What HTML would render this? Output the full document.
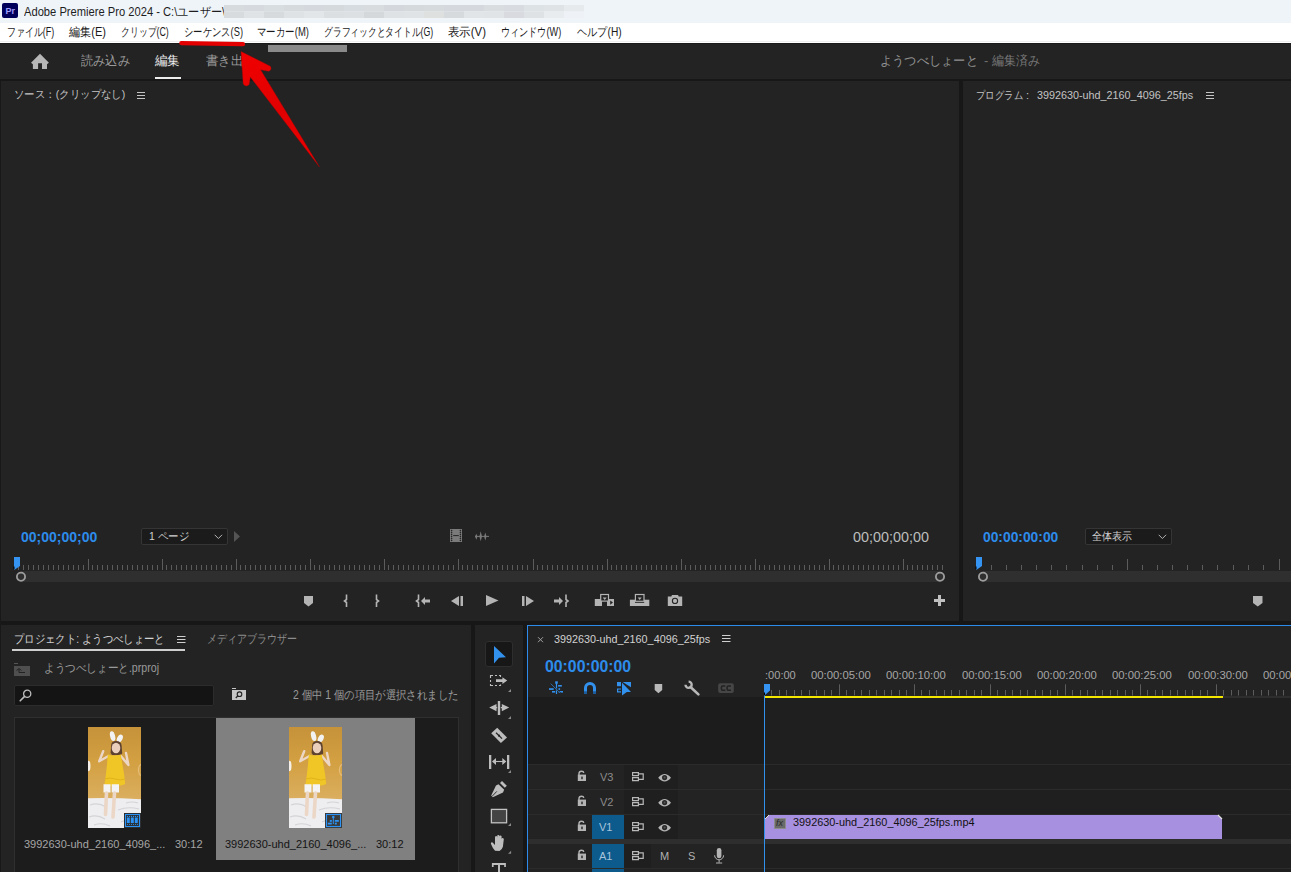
<!DOCTYPE html>
<html><head><meta charset="utf-8">
<style>
*{margin:0;padding:0;box-sizing:border-box}
html,body{width:1291px;height:872px;overflow:hidden;background:#171717;font-family:"Liberation Sans",sans-serif}
.a{position:absolute}
.t{position:absolute;white-space:nowrap;line-height:1}
.f{display:inline-block;white-space:nowrap;transform:scaleX(var(--s));transform-origin:0 0}
.panel{position:absolute;background:#232323;overflow:hidden}
.mi{position:absolute;top:24px;font-size:12px;color:#1a1a1a;white-space:nowrap;line-height:16px}
svg{position:absolute;overflow:visible}
</style></head><body>
<!-- title bar -->
<div class="a" style="left:0;top:0;width:1291px;height:23px;background:#eff4f9"></div>
<div class="a" style="left:2px;top:3px;width:16px;height:15px;background:#00005b;border-radius:2px"></div>
<div class="t" style="left:5.5px;top:6.5px;font-size:9px;font-weight:bold;color:#a0a0ff">Pr</div>
<div class="t" style="left:24px;top:5px;font-size:12px;line-height:14px;color:#1e1e1e"><span class="f" style="--w:201px;--s:0.9306">Adobe Premiere Pro 2024 - C:\ユーザー\</span></div>
<svg style="left:0;top:0" width="600" height="23"><rect x="224" y="5" width="20" height="6.5" fill="#d8dbde"/><rect x="224" y="11.5" width="20" height="6.5" fill="#d8dbde"/><rect x="244" y="5" width="20" height="6.5" fill="#d6dade"/><rect x="244" y="11.5" width="20" height="6.5" fill="#e0e3e6"/><rect x="264" y="5" width="20" height="6.5" fill="#d8dde0"/><rect x="264" y="11.5" width="20" height="6.5" fill="#d6dadd"/><rect x="284" y="5" width="20" height="6.5" fill="#d6dadd"/><rect x="284" y="11.5" width="20" height="6.5" fill="#dfe2e5"/><rect x="304" y="5" width="20" height="6.5" fill="#d5d9dd"/><rect x="304" y="11.5" width="20" height="6.5" fill="#e3e6e8"/><rect x="324" y="5" width="20" height="6.5" fill="#d5d9dc"/><rect x="324" y="11.5" width="20" height="6.5" fill="#dcdfe2"/><rect x="344" y="5" width="20" height="6.5" fill="#d7dce0"/><rect x="344" y="11.5" width="20" height="6.5" fill="#dde0e3"/><rect x="364" y="5" width="20" height="6.5" fill="#d8dcdf"/><rect x="364" y="11.5" width="20" height="6.5" fill="#d4d8db"/><rect x="384" y="5" width="20" height="6.5" fill="#d4d8dc"/><rect x="384" y="11.5" width="20" height="6.5" fill="#dfe2e5"/><rect x="404" y="5" width="20" height="6.5" fill="#d5d9dc"/><rect x="404" y="11.5" width="20" height="6.5" fill="#e0e3e6"/><rect x="424" y="5" width="20" height="6.5" fill="#d6dadd"/><rect x="424" y="11.5" width="20" height="6.5" fill="#dde0de"/><rect x="444" y="5" width="20" height="6.5" fill="#d5d9dd"/><rect x="444" y="11.5" width="20" height="6.5" fill="#d6dadd"/><rect x="464" y="5" width="20" height="6.5" fill="#d5d9dd"/><rect x="464" y="11.5" width="20" height="6.5" fill="#e2e5e8"/><rect x="484" y="5" width="20" height="6.5" fill="#d9dde0"/><rect x="484" y="11.5" width="20" height="6.5" fill="#e1e4e7"/><rect x="504" y="5" width="20" height="6.5" fill="#d8dce0"/><rect x="504" y="11.5" width="20" height="6.5" fill="#d9dadf"/><rect x="524" y="5" width="20" height="6.5" fill="#dde2e5"/><rect x="524" y="11.5" width="20" height="6.5" fill="#dfe2e5"/><rect x="544" y="5" width="20" height="6.5" fill="#dfe3e6"/><rect x="544" y="11.5" width="20" height="6.5" fill="#e9ecef"/><rect x="564" y="5" width="20" height="6.5" fill="#e6eaed"/><rect x="564" y="11.5" width="20" height="6.5" fill="#eef2f6"/></svg>
<!-- menu bar -->
<div class="a" style="left:0;top:23px;width:1291px;height:20px;background:#fff"></div><div class="a" style="left:0;top:41px;width:1291px;height:1px;background:#efefef"></div>
<div class="mi" style="left:7px"><span class="f" style="--w:47px;--s:0.7460">ファイル(F)</span></div>
<div class="mi" style="left:69px"><span class="f" style="--w:37px;--s:0.9250">編集(E)</span></div>
<div class="mi" style="left:121px"><span class="f" style="--w:48px;--s:0.7385">クリップ(C)</span></div>
<div class="mi" style="left:184px"><span class="f" style="--w:59px;--s:0.7763">シーケンス(S)</span></div>
<div class="mi" style="left:257px"><span class="f" style="--w:52px;--s:0.7879">マーカー(M)</span></div>
<div class="mi" style="left:324px"><span class="f" style="--w:109px;--s:0.7315">グラフィックとタイトル(G)</span></div>
<div class="mi" style="left:448px"><span class="f" style="--w:38px;--s:0.9500">表示(V)</span></div>
<div class="mi" style="left:501px"><span class="f" style="--w:60px;--s:0.7595">ウィンドウ(W)</span></div>
<div class="mi" style="left:577px"><span class="f" style="--w:45px;--s:0.8491">ヘルプ(H)</span></div>

<!-- workspace bar -->
<div class="a" style="left:0;top:43px;width:1291px;height:36px;background:#232323"></div><div class="a" style="left:0;top:43px;width:1291px;height:1px;background:#1a1a1a"></div>
<svg style="left:31px;top:54px" width="18" height="15" viewBox="0 0 18 15"><path d="M9 -0.3L17.9 8.7L16 10.2V15H11V9.3H7.1V15H1.9V10.2L0 8.7Z" fill="#b6b6b6"/></svg>
<div class="t" style="left:81px;top:53px;font-size:13px;line-height:15px;color:#9a9a9a"><span class="f" style="--w:49px;--s:0.9423">読み込み</span></div>
<div class="t" style="left:155px;top:53px;font-size:13px;line-height:15px;color:#ececec"><span class="f" style="--w:25px;--s:0.9615">編集</span></div>
<div class="a" style="left:155px;top:77px;width:26px;height:2px;background:#ececec"></div>
<div class="t" style="left:206px;top:53px;font-size:13px;line-height:15px;color:#9a9a9a"><span class="f" style="--w:50px;--s:0.9615">書き出し</span></div>
<div class="t" style="left:880px;top:53px;font-size:13px;line-height:15px;color:#939393"><span class="f" style="--w:98px;--s:0.9423">ようつべしょーと</span></div><div class="t" style="left:984px;top:53px;font-size:13px;line-height:15px;color:#6e6e6e">-</div><div class="t" style="left:992px;top:53px;font-size:13px;line-height:15px;color:#777"><span class="f" style="--w:48px;--s:0.9231">編集済み</span></div>

<!-- PANELS_START -->
<!-- SOURCE PANEL -->
<div class="panel" style="left:0;top:81px;width:959px;height:540px"></div>
<div class="t" style="left:14px;top:88px;font-size:11px;line-height:12px;color:#c4c4c4"><span class="f" style="--w:111px;--s:0.9487">ソース：(クリップなし)</span></div>
<svg style="left:137px;top:92px" width="9" height="8"><path d="M0 0.5H8M0 3.5H8M0 6.5H8" stroke="#c4c4c4" stroke-width="1"/></svg>
<div class="t" style="left:21px;top:530px;font-size:14px;line-height:14px;font-weight:bold;color:#2d8ceb"><span class="f" style="--w:76px;--s:1.0000">00;00;00;00</span></div>
<div class="a" style="left:141px;top:528px;width:87px;height:17px;background:#1b1b1b;border:1px solid #353535;border-radius:2px"></div>
<div class="t" style="left:149px;top:530px;font-size:11px;line-height:12px;color:#d0d0d0"><span class="f" style="--w:40px;--s:0.9524">1 ページ</span></div>
<svg style="left:214px;top:534px" width="10" height="6"><path d="M0.7 0.8L4.4 4.5L8.1 0.8" stroke="#b4b4b4" fill="none" stroke-width="1"/></svg>
<svg style="left:234px;top:531px" width="7" height="11"><path d="M0 0L6 5.5L0 11Z" fill="#545454"/></svg>
<svg style="left:450px;top:529px" width="13" height="13"><rect x="0" y="0" width="12" height="13" fill="#7a7a7a"/><g fill="#262626"><circle cx="1.6" cy="1.6" r="0.8"/><circle cx="10.4" cy="1.6" r="0.8"/><circle cx="1.6" cy="3.6" r="0.8"/><circle cx="10.4" cy="3.6" r="0.8"/><circle cx="1.6" cy="5.6" r="0.8"/><circle cx="10.4" cy="5.6" r="0.8"/><circle cx="1.6" cy="7.6" r="0.8"/><circle cx="10.4" cy="7.6" r="0.8"/><circle cx="1.6" cy="9.6" r="0.8"/><circle cx="10.4" cy="9.6" r="0.8"/><circle cx="1.6" cy="11.5" r="0.8"/><circle cx="10.4" cy="11.5" r="0.8"/></g><rect x="3.2" y="6" width="5.6" height="1.1" fill="#2c2c2c"/></svg>
<svg style="left:474px;top:530px" width="16" height="12"><path d="M1 6.4H15" stroke="#7a7a7a" stroke-width="1"/><path d="M2.3 3.8L3.5 6.4L2.3 9.8L1.1 6.4Z M6.7 1.2L8 6.4L6.7 11.2L5.4 6.4Z M11.3 2.6L12.5 6.4L11.3 10.4L10.1 6.4Z" fill="#7a7a7a"/></svg>
<div class="t" style="left:853px;top:530px;font-size:14px;line-height:14px;color:#bdbdbd"><span class="f" style="--w:76px;--s:1.0270">00;00;00;00</span></div>
<svg style="left:0;top:0" width="959" height="621"><path d="M14.5 559V570M18.5 565V570M23.5 565V570M28.5 565V570M33.5 565V570M38.5 565V570M43.5 565V570M48.5 565V570M53.5 565V570M58.5 565V570M63.5 565V570M68.5 565V570M73.5 565V570M78.5 565V570M83.5 565V570M88.5 559V570M92.5 565V570M97.5 565V570M102.5 565V570M107.5 565V570M112.5 565V570M117.5 565V570M122.5 565V570M127.5 565V570M132.5 565V570M137.5 565V570M142.5 565V570M147.5 565V570M152.5 565V570M157.5 565V570M162.5 559V570M166.5 565V570M171.5 565V570M176.5 565V570M181.5 565V570M186.5 565V570M191.5 565V570M196.5 565V570M201.5 565V570M206.5 565V570M211.5 565V570M216.5 565V570M221.5 565V570M226.5 565V570M231.5 565V570M236.5 559V570M240.5 565V570M245.5 565V570M250.5 565V570M255.5 565V570M260.5 565V570M265.5 565V570M270.5 565V570M275.5 565V570M280.5 565V570M285.5 565V570M290.5 565V570M295.5 565V570M300.5 565V570M305.5 565V570M310.5 559V570M314.5 565V570M319.5 565V570M324.5 565V570M329.5 565V570M334.5 565V570M339.5 565V570M344.5 565V570M349.5 565V570M354.5 565V570M359.5 565V570M364.5 565V570M369.5 565V570M374.5 565V570M379.5 565V570M384.5 559V570M388.5 565V570M393.5 565V570M398.5 565V570M403.5 565V570M408.5 565V570M413.5 565V570M418.5 565V570M423.5 565V570M428.5 565V570M433.5 565V570M438.5 565V570M443.5 565V570M448.5 565V570M453.5 565V570M458.5 559V570M462.5 565V570M467.5 565V570M472.5 565V570M477.5 565V570M482.5 565V570M487.5 565V570M492.5 565V570M497.5 565V570M502.5 565V570M507.5 565V570M512.5 565V570M517.5 565V570M522.5 565V570M527.5 565V570M533.5 559V570M537.5 565V570M542.5 565V570M547.5 565V570M552.5 565V570M557.5 565V570M562.5 565V570M567.5 565V570M572.5 565V570M577.5 565V570M582.5 565V570M587.5 565V570M592.5 565V570M597.5 565V570M602.5 565V570M607.5 559V570M611.5 565V570M616.5 565V570M621.5 565V570M626.5 565V570M631.5 565V570M636.5 565V570M641.5 565V570M646.5 565V570M651.5 565V570M656.5 565V570M661.5 565V570M666.5 565V570M671.5 565V570M676.5 565V570M681.5 559V570M685.5 565V570M690.5 565V570M695.5 565V570M700.5 565V570M705.5 565V570M710.5 565V570M715.5 565V570M720.5 565V570M725.5 565V570M730.5 565V570M735.5 565V570M740.5 565V570M745.5 565V570M750.5 565V570M755.5 559V570M759.5 565V570M764.5 565V570M769.5 565V570M774.5 565V570M779.5 565V570M784.5 565V570M789.5 565V570M794.5 565V570M799.5 565V570M804.5 565V570M809.5 565V570M814.5 565V570M819.5 565V570M824.5 565V570M829.5 559V570M833.5 565V570M838.5 565V570M843.5 565V570M848.5 565V570M853.5 565V570M858.5 565V570M863.5 565V570M868.5 565V570M873.5 565V570M878.5 565V570M883.5 565V570M888.5 565V570M893.5 565V570M898.5 565V570M903.5 559V570M907.5 565V570M912.5 565V570M917.5 565V570M922.5 565V570M927.5 565V570M932.5 565V570M937.5 565V570M942.5 565V570" stroke="#5c5c5c" stroke-width="1"/></svg>
<div class="a" style="left:21px;top:571px;width:919px;height:11px;background:#2f2f2f"></div>
<svg style="left:14px;top:557px" width="7" height="13"><path d="M0 0H6V9L1 12.5H0Z" fill="#3593f2"/><path d="M0 9.5V12.5" stroke="#000" stroke-width="1"/></svg>
<svg style="left:16px;top:572px" width="10" height="10"><circle cx="5" cy="4.7" r="4.1" stroke="#9e9e9e" stroke-width="1.8" fill="#2f2f2f"/></svg>
<svg style="left:935px;top:572px" width="10" height="10"><circle cx="5" cy="4.7" r="4.1" stroke="#9e9e9e" stroke-width="1.8" fill="#2f2f2f"/></svg>
<!-- transport -->
<svg style="left:0;top:0" width="959" height="621" fill="#b4b4b4" stroke="#b4b4b4">
 <path d="M304 596H313V603L308.5 606.5L304 603Z" stroke="none"/>
 <path d="M346.5 594.5V599.5L344.5 601L346.5 602.5V607" fill="none" stroke-width="1.6"/>
 <path d="M376.5 594.5V599.5L378.5 601L376.5 602.5V607" fill="none" stroke-width="1.6"/>
 <path d="M418.5 594.5V599.5L416.5 601L418.5 602.5V607" fill="none" stroke-width="1.6"/>
 <path d="M421 601L425 597V599.5H430V602.5H425V605Z" stroke="none"/>
 <path d="M451 601L459 596V606Z M460.5 596H463V606H460.5Z" stroke="none"/>
 <path d="M486 595V606L498.5 600.5Z" stroke="none"/>
 <path d="M522 596H524.5V606H522Z M526 596V606L534 601Z" stroke="none"/>
 <path d="M554 599.5H559V597L563 601L559 605V602.5H554Z" stroke="none"/>
 <path d="M566 594.5V599.5L568 601L566 602.5V607" fill="none" stroke-width="1.6"/>
 <path d="M594.8 599H602V606H594.8Z M607 599H614V606H607Z" stroke="none"/>
 <rect x="600.7" y="594.5" width="7.8" height="6.6" fill="#232323" stroke="#b4b4b4" stroke-width="1.2"/>
 <path d="M602.8 597.4H606.7L604.75 600Z" stroke="none"/>
 <path d="M610.2 600.6L613 602.6L610.2 604.7Z" fill="#232323" stroke="none"/>
 <path d="M629.9 599.7H649.3V606H629.9Z" stroke="none"/>
 <rect x="635.4" y="594.5" width="8.6" height="6.8" fill="#232323" stroke="#b4b4b4" stroke-width="1.2"/>
 <path d="M637.7 597.4H641.7L639.7 600Z" stroke="none"/>
 <path d="M635 602.4H644.2" stroke="#232323" stroke-width="0.9"/>
 <path d="M667.8 596.6H671.3L672 595H678L678.7 596.6H682.2V606H667.8Z" stroke="none"/>
 <circle cx="675" cy="600.9" r="2.6" fill="none" stroke="#232323" stroke-width="1.1"/>
 <path d="M934 599H945V602H934Z M938 595H941V606H938Z" stroke="none" fill="#c0c0c0"/>
</svg>

<!-- PROGRAM PANEL -->
<div class="panel" style="left:963px;top:81px;width:328px;height:540px"></div>
<div class="t" style="left:976px;top:89px;font-size:11px;line-height:12px;color:#c4c4c4"><span class="f" style="--w:47px;--s:0.8545">プログラム</span></div><div class="t" style="left:1026px;top:89px;font-size:11px;line-height:12px;color:#c4c4c4">:</div><div class="t" style="left:1037px;top:89px;font-size:11px;line-height:12px;color:#c4c4c4"><span class="f" style="--w:156px;--s:0.9811">3992630-uhd_2160_4096_25fps</span></div>
<svg style="left:1206px;top:92px" width="9" height="8"><path d="M0 0.5H8M0 3.5H8M0 6.5H8" stroke="#c4c4c4" stroke-width="1"/></svg>
<div class="t" style="left:983px;top:530px;font-size:14px;line-height:14px;font-weight:bold;color:#2d8ceb"><span class="f" style="--w:75px;--s:0.9868">00:00:00:00</span></div>
<div class="a" style="left:1085px;top:528px;width:87px;height:17px;background:#1b1b1b;border:1px solid #353535;border-radius:2px"></div>
<div class="t" style="left:1092px;top:530px;font-size:11px;line-height:12px;color:#d0d0d0"><span class="f" style="--w:40px;--s:0.9091">全体表示</span></div>
<svg style="left:1158px;top:534px" width="10" height="6"><path d="M0.7 0.8L4.4 4.5L8.1 0.8" stroke="#b4b4b4" fill="none" stroke-width="1"/></svg>
<svg style="left:0;top:0" width="1291" height="621"><path d="M976.5 559V570M991.5 565V570M1006.5 565V570M1021.5 565V570M1036.5 565V570M1051.5 565V570M1066.5 565V570M1082.5 565V570M1097.5 565V570M1112.5 565V570M1127.5 559V570M1142.5 565V570M1157.5 565V570M1172.5 565V570M1187.5 565V570M1202.5 565V570M1217.5 565V570M1233.5 565V570M1248.5 565V570M1263.5 565V570M1279.5 559V570" stroke="#5c5c5c" stroke-width="1"/></svg>
<div class="a" style="left:983px;top:571px;width:308px;height:11px;background:#2f2f2f"></div>
<svg style="left:976px;top:557px" width="7" height="13"><path d="M0 0H6V9L1 12.5H0Z" fill="#3593f2"/><path d="M0 9.5V12.5" stroke="#000" stroke-width="1"/></svg>
<svg style="left:978px;top:572px" width="10" height="10"><circle cx="5" cy="4.7" r="4.1" stroke="#9e9e9e" stroke-width="1.8" fill="#2f2f2f"/></svg>
<svg style="left:1253px;top:595px" width="10" height="12"><path d="M0 1H9.5V8L4.75 11.5L0 8Z" fill="#b4b4b4"/></svg>
<!-- PROJECT PANEL -->
<div class="panel" style="left:0;top:625px;width:471px;height:247px"></div>
<svg width="0" height="0" style="left:0;top:0">
<defs>
<linearGradient id="wall" x1="0" y1="0" x2="0" y2="1"><stop offset="0" stop-color="#c6923a"/><stop offset="0.35" stop-color="#d3a042"/><stop offset="0.7" stop-color="#daae5e"/></linearGradient>
<symbol id="thumb" viewBox="0 0 53 101">
 <rect width="53" height="101" fill="url(#wall)"/>
 <path d="M0 71.2Q26 70.5 53 72.3V101H0Z" fill="#eeeef0"/>
 <path d="M2 78Q10 75 18 80M30 83Q40 79 51 82M1 90Q9 87 17 92M33 95Q42 90 52 93M6 98Q14 95 22 99M38 76Q44 74 50 76" stroke="#d4d4d8" fill="none" stroke-width="1.1"/>
 <ellipse cx="0.5" cy="39" rx="2" ry="5.2" fill="#f4efe8"/>
 <ellipse cx="53.5" cy="43" rx="3" ry="5.5" fill="none" stroke="#e6bc78" stroke-width="1.3"/>
 <ellipse cx="24.6" cy="9.2" rx="2.5" ry="5" fill="#f2f2f2" transform="rotate(-14 24.6 9.2)"/>
 <ellipse cx="31.8" cy="11.4" rx="2.7" ry="4" fill="#f2f2f2" transform="rotate(28 31.8 11.4)"/>
 <path d="M23.2 18Q23.5 14 28.3 14Q33.2 14 33.6 18.5L34.2 26.5L32.5 28H24L22.6 26Z" fill="#5e4230"/>
 <ellipse cx="28" cy="21" rx="4.3" ry="5.3" fill="#ead0bc"/>
 <path d="M20.5 29L11.2 34.3L15.2 24.2" stroke="#ecd6c6" stroke-width="2.4" fill="none" stroke-linecap="round" stroke-linejoin="round"/>
 <path d="M32.8 29L40.4 38L38 26" stroke="#ecd6c6" stroke-width="2.4" fill="none" stroke-linecap="round" stroke-linejoin="round"/>
 <path d="M19.8 27.6Q26 29.5 32.8 27.6L34.5 38L36.2 48L37.2 57Q33 59.5 27 58.5Q21 60 16.4 58L17.8 48L19 38Z" fill="#f0c626"/>
 <path d="M17 52Q22 50 27 52T37 52" stroke="#e0b018" stroke-width="0.9" fill="none"/>
 <path d="M15.5 57.2H22.5V65.6H15.5Z M23.7 57.2H31V65.6H23.7Z" fill="#f4f4f4"/>
 <path d="M18.5 66L17.5 87.5M26.5 66L25 90" stroke="#ecd6c6" stroke-width="3.6" stroke-linecap="round"/>
</symbol>
</defs></svg>
<div class="t" style="left:14px;top:633px;font-size:12px;line-height:12px;color:#d2d2d2"><span class="f" style="--w:151px;--s:0.8629">プロジェクト: ようつべしょーと</span></div>
<svg style="left:177px;top:636px" width="9" height="8"><path d="M0 0.5H8.5M0 3.5H8.5M0 6.5H8.5" stroke="#cfcfcf" stroke-width="1"/></svg>
<div class="a" style="left:12px;top:649px;width:173px;height:2px;background:#cfcfcf"></div>
<div class="t" style="left:207px;top:633px;font-size:12px;line-height:12px;color:#8c8c8c"><span class="f" style="--w:90px;--s:0.8333">メディアブラウザー</span></div>
<svg style="left:14px;top:663px" width="17" height="14"><path d="M0 0.5H4" stroke="#555" stroke-width="1"/><rect x="0" y="3" width="16" height="10" fill="#4f4f4f"/><path d="M5 6V9.5H11M7.5 7.5L5 5.5L2.5 7.5" stroke="#232323" stroke-width="1" fill="none"/></svg>
<div class="t" style="left:44px;top:662px;font-size:12px;line-height:12px;color:#9a9a9a"><span class="f" style="--w:115px;--s:0.8846">ようつべしょーと.prproj</span></div>
<div class="a" style="left:14px;top:685px;width:200px;height:21px;background:#141414;border:1px solid #2c2c2c;border-radius:2px"></div>
<svg style="left:19px;top:689px" width="14" height="13"><circle cx="8.2" cy="4.8" r="3.6" stroke="#bdbdbd" stroke-width="1.3" fill="none"/><path d="M5.6 7.4L1.2 11.8" stroke="#bdbdbd" stroke-width="1.6" stroke-linecap="round"/></svg>
<svg style="left:232px;top:688px" width="15" height="13"><path d="M0 0.5H4" stroke="#c6c6c6" stroke-width="1"/><rect x="0" y="2" width="14" height="10" fill="#c6c6c6"/><circle cx="7.5" cy="6.2" r="2.3" stroke="#232323" stroke-width="1.1" fill="none"/><path d="M5.8 7.9L3.8 10" stroke="#232323" stroke-width="1.3"/></svg>
<div class="t" style="left:293px;top:689px;font-size:12px;line-height:12px;color:#9a9a9a"><span class="f" style="--w:165px;--s:0.8639">2 個中 1 個の項目が選択されました</span></div>
<div class="a" style="left:14px;top:717px;width:445px;height:160px;background:#1c1c1c;border:1px solid #2f2f2f"></div>
<div class="a" style="left:216px;top:718px;width:199px;height:142px;background:#808080"></div>
<svg style="left:88px;top:727px" width="53" height="101"><use href="#thumb"/></svg>
<svg style="left:289px;top:727px" width="53" height="101"><use href="#thumb"/></svg>
<svg style="left:124px;top:813px" width="17" height="15"><rect width="17" height="15" fill="#2c2c2c"/><rect x="1.5" y="1.5" width="14" height="12" fill="none" stroke="#2d93f5" stroke-width="1.1"/><g fill="#2d93f5"><circle cx="3.4" cy="3.4" r="0.6"/><circle cx="5.4" cy="3.4" r="0.6"/><circle cx="7.4" cy="3.4" r="0.6"/><circle cx="9.4" cy="3.4" r="0.6"/><circle cx="11.4" cy="3.4" r="0.6"/><circle cx="13.4" cy="3.4" r="0.6"/><circle cx="3.4" cy="11.5" r="0.6"/><circle cx="5.4" cy="11.5" r="0.6"/><circle cx="7.4" cy="11.5" r="0.6"/><circle cx="9.4" cy="11.5" r="0.6"/><circle cx="11.4" cy="11.5" r="0.6"/><circle cx="13.4" cy="11.5" r="0.6"/><rect x="2.8" y="4.5" width="3" height="5.6"/><rect x="6.8" y="4.5" width="3" height="5.6"/><rect x="10.8" y="4.5" width="3" height="5.6"/></g></svg>
<svg style="left:325px;top:813px" width="17" height="15"><rect width="17" height="15" fill="#3a3a3a"/><rect x="1.5" y="1.5" width="14" height="12" fill="none" stroke="#2d93f5" stroke-width="1.1"/><g fill="#2d93f5"><circle cx="8.3" cy="4" r="1.3"/><rect x="7.8" y="4" width="1" height="7"/><rect x="4.8" y="7" width="2" height="1.8"/><rect x="9.8" y="7" width="4" height="1.8"/><rect x="2.8" y="9.7" width="4" height="1.8"/><rect x="9.8" y="9.7" width="2" height="1.8"/></g></svg>
<div class="t" style="left:24px;top:838px;font-size:11px;line-height:12px;color:#a6a6a6"><span class="f" style="--w:141px;--s:1.0000">3992630-uhd_2160_4096_...</span></div>
<div class="t" style="left:175px;top:838px;font-size:11px;line-height:12px;color:#a6a6a6"><span class="f" style="--w:28px;--s:1.0000">30:12</span></div>
<div class="t" style="left:225px;top:838px;font-size:11px;line-height:12px;color:#141414"><span class="f" style="--w:141px;--s:1.0000">3992630-uhd_2160_4096_...</span></div>
<div class="t" style="left:376px;top:838px;font-size:11px;line-height:12px;color:#141414"><span class="f" style="--w:28px;--s:1.0000">30:12</span></div>

<!-- TOOLS PANEL -->
<div class="panel" style="left:475px;top:625px;width:48px;height:247px"></div>
<div class="a" style="left:485px;top:641px;width:28px;height:26px;background:#171717;border:1px solid #2e2e2e;border-radius:3px"></div>
<svg style="left:0;top:0" width="523" height="872" fill="#bdbdbd">
 <path d="M494 646L506 657.3L499 657.8L494 663.5Z" fill="#3391ee"/>
 <path d="M490.5 678V675.5H493M495 675.5H497M499 675.5H500.5V677M490.5 680V682M490.5 684V685.5H493M495 685.5H497M499 685.5H500.5V684.5" stroke="#bdbdbd" stroke-width="1.1" fill="none"/>
 <path d="M496 679.2H502.4V677.2L507.2 680.6L502.4 684V682H496Z"/>
 <path d="M508 692L511 689V692Z" fill="#8a8a8a"/>
 <path d="M497.8 701H500.2V715H497.8Z"/>
 <path d="M489.2 707.6L496.5 703.9V706.9H497.2V708.3H496.5V711.3Z M509.2 707.6L501.8 703.9V706.9H500.8V708.3H501.8V711.3Z"/>
 <path d="M508 719L511 716V719Z" fill="#8a8a8a"/>
 <path d="M497.2 727.7L507 737.5L500.9 742.9L491.2 733.2Z"/>
 <path d="M496 732.8L502 738.6" stroke="#232323" stroke-width="1.2"/>
 <circle cx="499" cy="735.7" r="1.1" fill="#232323"/>
 <path d="M489 755H491.3V769H489Z M507 755H509.3V769H507Z"/>
 <path d="M494.5 761.5H503.5" stroke="#bdbdbd" stroke-width="1.1"/>
 <path d="M492 761.5L496 758V765Z M506.3 761.5L502.3 758V765Z"/>
 <path d="M508 773L511 770V773Z" fill="#8a8a8a"/>
 <path d="M500 783L502 781L506.8 785.8L504.8 787.8Z"/>
 <path d="M498.5 784.2L504.2 789.8L503 792.5L492.8 797.2L491.2 795.6L496 785.4Z"/>
 <path d="M492 796.4L496.8 791.4" stroke="#232323" stroke-width="0.9"/>
 <rect x="491.4" y="809.4" width="15.2" height="13.4" fill="#444" stroke="#c2c2c2" stroke-width="1.3"/>
 <path d="M508 826L511 823V826Z" fill="#8a8a8a"/>
 <path d="M495 850.8Q492.5 848 491 844L490.9 843Q491.5 842 492.6 842.6L495 845V837.4Q495.2 836.1 496.1 836.1Q497.1 836.1 497.2 837.4V842.5V835.8Q497.3 834.9 498.3 834.9Q499.3 834.9 499.4 835.8V842.5V836.5Q499.5 835.6 500.5 835.6Q501.5 835.6 501.6 836.5V843V839Q501.8 838 502.8 838Q503.9 838.2 503.8 839.2L502.9 846.8Q502 850 499.5 850.9Z"/>
 <path d="M508 853.8L511.1 850.8V853.8Z" fill="#8a8a8a"/>
 <path d="M491.9 863H505.9V867H504.2V865H500V872H498V865H493.6V867H491.9Z"/>
</svg>

<!-- TIMELINE PANEL -->
<div class="panel" style="left:527px;top:625px;width:764px;height:247px"></div>
<div class="a" style="left:528px;top:697px;width:236px;height:67px;background:#1c1c1c"></div>
<div class="a" style="left:765px;top:698px;width:526px;height:174px;background:#1f1f1f"></div>
<div class="a" style="left:528px;top:764px;width:236px;height:108px;background:#232323"></div>
<!-- track separators -->
<div class="a" style="left:528px;top:764px;width:763px;height:1px;background:#2b2b2b"></div>
<div class="a" style="left:528px;top:789px;width:763px;height:1px;background:#2b2b2b"></div>
<div class="a" style="left:528px;top:814px;width:763px;height:1px;background:#2b2b2b"></div>
<div class="a" style="left:528px;top:839px;width:763px;height:5px;background:#2e2e2e"></div>
<div class="a" style="left:528px;top:868px;width:763px;height:1px;background:#2b2b2b"></div>
<!-- header columns darker -->
<div class="a" style="left:624px;top:765px;width:54px;height:24px;background:#1f1f1f"></div>
<div class="a" style="left:624px;top:790px;width:54px;height:24px;background:#1f1f1f"></div>
<div class="a" style="left:624px;top:815px;width:54px;height:24px;background:#1f1f1f"></div>
<div class="a" style="left:624px;top:844px;width:27px;height:24px;background:#1f1f1f"></div>
<div class="a" style="left:592px;top:815px;width:32px;height:24px;background:#0d5a8c"></div>
<div class="a" style="left:592px;top:844px;width:32px;height:24px;background:#0d5a8c"></div>
<div class="a" style="left:592px;top:869px;width:32px;height:3px;background:#0d5a8c"></div>
<!-- border -->
<div class="a" style="left:527px;top:625px;width:764px;height:1px;background:#2d8ceb"></div>
<div class="a" style="left:527px;top:625px;width:1px;height:247px;background:#2d8ceb"></div>
<svg style="left:537px;top:636px" width="7" height="7"><path d="M1 1.2L6 6.2M6 1.2L1 6.2" stroke="#a0a0a0" stroke-width="1"/></svg>
<div class="t" style="left:554px;top:633px;font-size:11px;line-height:12px;color:#d2d2d2"><span class="f" style="--w:156px;--s:0.9811">3992630-uhd_2160_4096_25fps</span></div>
<svg style="left:722px;top:635px" width="9" height="8"><path d="M0 0.5H8.5M0 3.5H8.5M0 6.5H8.5" stroke="#cfcfcf" stroke-width="1"/></svg>
<div class="t" style="left:545px;top:659px;font-size:16px;line-height:16px;font-weight:bold;color:#2d8ceb"><span class="f" style="--w:86px;--s:0.9885">00:00:00:00</span></div>
<svg style="left:0;top:0" width="1291" height="872">
 <g fill="#3391ee">
  <rect x="555.2" y="681.3" width="2.6" height="2.4"/>
  <rect x="555.9" y="683" width="1.2" height="11"/>
  <rect x="558.1" y="685" width="3.7" height="1.6"/>
  <rect x="549" y="688.2" width="4.7" height="1.7"/>
  <rect x="558.5" y="688.2" width="1.6" height="1.7"/>
  <rect x="552" y="691" width="3.2" height="1.6"/>
  <rect x="558.5" y="691" width="4.5" height="1.6"/>
 </g>
 <path d="M550.3 683.2L560.7 693.6" stroke="#232323" stroke-width="1.4"/>
 <path d="M550.8 683.7L560.2 693.1" stroke="#3391ee" stroke-width="0.7"/>
 <path d="M584 694V688A6 6 0 0 1 596 688V694H593V688A3 3 0 0 0 587 688V694Z" fill="#3391ee"/>
 <path d="M584 691.3H587V694H584ZM593 691.3H596V694H593Z" fill="#1d5c9c"/>
 <path d="M617 682H621V686.2H617Z" fill="#3391ee"/>
 <path d="M617 688.4H621V689.6H618.2V691.3H621V692.5H617Z" fill="#3391ee"/>
 <path d="M622.6 682H631V687.2Z" fill="#3391ee"/>
 <path d="M622 682.8L631 692L626.8 692L622 695.5Z" fill="#3391ee"/>
 <path d="M654.7 684H662.2V690L658.45 693.3L654.7 690Z" fill="#b8b8b8"/>
 <path d="M688.6 681.7A3.1 3.1 0 1 1 685.5 684.8" stroke="#b8b8b8" stroke-width="2.3" fill="none"/>
 <path d="M690.5 687L698.4 694.4" stroke="#b8b8b8" stroke-width="2.6" stroke-linecap="round"/>
 <rect x="718.2" y="683.2" width="15.6" height="9.7" rx="2" fill="#464646"/>
 <path d="M725.3 686H722.6Q721.4 686 721.4 687.2V689Q721.4 690.2 722.6 690.2H725.3M731 686H728.3Q727.1 686 727.1 687.2V689Q727.1 690.2 728.3 690.2H731" stroke="#222" stroke-width="1.5" fill="none"/>
</svg>
<!-- ruler -->
<svg style="left:0;top:0" width="1291" height="872"><path d="M764.5 684.3V695.5M771.5 690V695.5M779.5 690V695.5M786.5 690V695.5M794.5 690V695.5M801.5 690V695.5M809.5 690V695.5M816.5 690V695.5M824.5 690V695.5M831.5 690V695.5M839.5 684.3V695.5M846.5 690V695.5M854.5 690V695.5M861.5 690V695.5M869.5 690V695.5M876.5 690V695.5M884.5 690V695.5M891.5 690V695.5M899.5 690V695.5M906.5 690V695.5M914.5 684.3V695.5M921.5 690V695.5M929.5 690V695.5M936.5 690V695.5M944.5 690V695.5M951.5 690V695.5M959.5 690V695.5M966.5 690V695.5M974.5 690V695.5M981.5 690V695.5M990.5 684.3V695.5M997.5 690V695.5M1005.5 690V695.5M1012.5 690V695.5M1020.5 690V695.5M1027.5 690V695.5M1035.5 690V695.5M1042.5 690V695.5M1050.5 690V695.5M1057.5 690V695.5M1065.5 684.3V695.5M1072.5 690V695.5M1080.5 690V695.5M1087.5 690V695.5M1095.5 690V695.5M1102.5 690V695.5M1110.5 690V695.5M1117.5 690V695.5M1125.5 690V695.5M1132.5 690V695.5M1140.5 684.3V695.5M1147.5 690V695.5M1155.5 690V695.5M1162.5 690V695.5M1170.5 690V695.5M1177.5 690V695.5M1185.5 690V695.5M1192.5 690V695.5M1200.5 690V695.5M1207.5 690V695.5M1216.5 684.3V695.5M1223.5 690V695.5M1231.5 690V695.5M1238.5 690V695.5M1246.5 690V695.5M1253.5 690V695.5M1261.5 690V695.5M1268.5 690V695.5M1276.5 690V695.5M1283.5 690V695.5M1291.5 684.3V695.5" stroke="#5c5c5c" stroke-width="1"/></svg>
<div class="t" style="left:765px;top:671px;font-size:10px;line-height:10px;color:#a6a6a6"><span class="f" style="--w:31px;--s:1.1071">:00:00</span></div>
<div class="t" style="left:811px;top:671px;font-size:10px;line-height:10px;color:#a6a6a6"><span class="f" style="--w:60px;--s:1.1321">00:00:05:00</span></div>
<div class="t" style="left:886px;top:671px;font-size:10px;line-height:10px;color:#a6a6a6"><span class="f" style="--w:60px;--s:1.1321">00:00:10:00</span></div>
<div class="t" style="left:962px;top:671px;font-size:10px;line-height:10px;color:#a6a6a6"><span class="f" style="--w:60px;--s:1.1321">00:00:15:00</span></div>
<div class="t" style="left:1037px;top:671px;font-size:10px;line-height:10px;color:#a6a6a6"><span class="f" style="--w:60px;--s:1.1321">00:00:20:00</span></div>
<div class="t" style="left:1112px;top:671px;font-size:10px;line-height:10px;color:#a6a6a6"><span class="f" style="--w:60px;--s:1.1321">00:00:25:00</span></div>
<div class="t" style="left:1188px;top:671px;font-size:10px;line-height:10px;color:#a6a6a6"><span class="f" style="--w:60px;--s:1.1321">00:00:30:00</span></div>
<div class="t" style="left:1263px;top:671px;font-size:10px;line-height:10px;color:#a6a6a6"><span class="f" style="--w:60px;--s:1.1321">00:00:35:00</span></div>
<div class="a" style="left:765px;top:696px;width:526px;height:2px;background:#2e2e2e"></div>
<div class="a" style="left:765px;top:696px;width:458px;height:2px;background:#f5e600"></div>
<!-- clip -->
<div class="a" style="left:765px;top:815px;width:457px;height:24px;background:#a890e0"></div>
<svg style="left:765px;top:815px" width="5" height="5"><path d="M0 0H4L0 4Z" fill="#1f1f1f"/><path d="M0 4L4 0" stroke="#e0e0e0" stroke-width="1"/></svg>
<svg style="left:1217px;top:815px" width="5" height="5"><path d="M1 0H5V4Z" fill="#1f1f1f"/><path d="M1 0L5 4" stroke="#e0e0e0" stroke-width="1.2"/></svg>
<div class="a" style="left:774px;top:818px;width:12px;height:11px;background:#6a6a6a;border:1px solid #8c8c8c"></div>
<div class="t" style="left:776px;top:819px;font-size:9px;line-height:9px;font-style:italic;color:#2a2a2a">fx</div>
<div class="t" style="left:793px;top:817px;font-size:11px;line-height:11px;color:#111"><span class="f" style="--w:182px;--s:0.9891">3992630-uhd_2160_4096_25fps.mp4</span></div>
<!-- track header contents -->
<svg style="left:0;top:0" width="1291" height="872" fill="#b4b4b4">
 <g id="lk"><path d="M577.8 774.6H586V781H577.8Z"/><path d="M579 775V773.6Q579 771.2 581.6 771.2Q583.6 771.2 583.8 772.8" stroke="#b4b4b4" stroke-width="1.4" fill="none"/><rect x="581.3" y="776.6" width="1.4" height="2.6" fill="#232323"/></g>
 <use href="#lk" y="25"/><use href="#lk" y="50"/><use href="#lk" y="79"/>
 <g id="sy" fill="none" stroke="#b8b8b8" stroke-width="1.2"><path d="M632.6 772.6H638.4V775.6H632.6ZM632.6 777.6H638.4V780.6H632.6Z"/><path d="M638.4 773.8H643.2V779.4H638.4" /></g>
 <use href="#sy" y="25"/><use href="#sy" y="50"/><use href="#sy" y="79"/>
 <g id="ey"><path d="M658.2 777.7Q664.6 770.2 671 777.7Q664.6 785.2 658.2 777.7Z"/><circle cx="664.6" cy="777.6" r="2.6" fill="#2a2a2a"/><circle cx="664.6" cy="777.6" r="1" fill="#555"/></g>
 <use href="#ey" y="25"/><use href="#ey" y="50"/>
 <path d="M716.8 850.2A2.3 2.3 0 0 1 721.4 850.2V856A2.3 2.3 0 0 1 716.8 856Z"/>
 <path d="M714.6 855.3A4.5 4.5 0 0 0 723.6 855.3M719.1 860V862.6M716 863H722.2" stroke="#b4b4b4" stroke-width="1" fill="none"/>
</svg>
<div class="t" style="left:600px;top:772px;font-size:11px;line-height:11px;color:#8c8c8c">V3</div>
<div class="t" style="left:600px;top:797px;font-size:11px;line-height:11px;color:#8c8c8c">V2</div>
<div class="t" style="left:599px;top:822px;font-size:11px;line-height:11px;color:#a8c4dc">V1</div>
<div class="t" style="left:599px;top:851px;font-size:11px;line-height:11px;color:#a8c4dc">A1</div>
<div class="t" style="left:660px;top:851px;font-size:11px;line-height:11px;color:#b0b0b0">M</div>
<div class="t" style="left:688px;top:851px;font-size:11px;line-height:11px;color:#b0b0b0">S</div>
<!-- playhead -->
<div class="a" style="left:764px;top:696px;width:1px;height:176px;background:#3391ee"></div>
<svg style="left:764px;top:684px" width="7" height="12"><path d="M0 0H6V6.5L0.5 11.5H0Z" fill="#3593f2"/><path d="M0.5 8.5V11" stroke="#000" stroke-width="1"/></svg>
<!-- PANELS_END -->

<div class="a" style="left:0;top:81px;width:1px;height:791px;background:#181818"></div>
<!-- annotations -->
<svg style="left:0;top:0" width="300" height="60"><path d="M181.3 43.1L243 44.2" stroke="#e40000" stroke-width="4.2" stroke-linecap="round"/></svg>
<div class="a" style="left:268px;top:45px;width:79px;height:7px;background:#8a8a8a"></div>
<svg style="left:0;top:0" width="1291" height="872">
 <defs><linearGradient id="rg" x1="241" y1="52" x2="320" y2="167" gradientUnits="userSpaceOnUse"><stop offset="0" stop-color="#f20000"/><stop offset="0.5" stop-color="#e00000"/><stop offset="1" stop-color="#f00000"/></linearGradient></defs>
 <path d="M241 51.5L270.3 66.2Q272.5 69.5 269 71.3L260.6 69.8L319.5 167L250.3 77L249.2 84.6Q246 87.5 243.2 84Z" fill="url(#rg)" stroke="#b00000" stroke-width="0.4" stroke-linejoin="round"/>
</svg>
</body></html>
